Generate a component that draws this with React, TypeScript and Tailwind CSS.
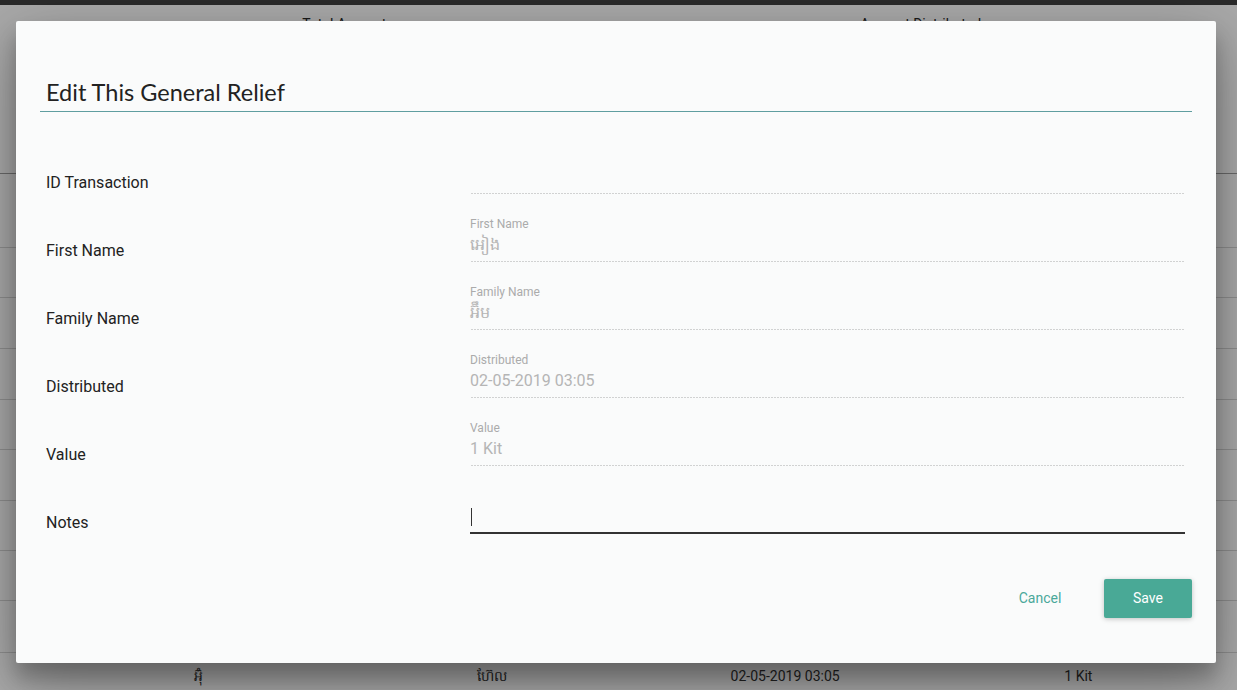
const rows = [
  { h: 'h-[50px]', a: 'សុខ', b: 'ចាន់', c: '02-05-2019 03:05', d: '1 Kit' },
  { h: 'h-[51px]', a: 'វណ្ណា', b: 'សៅ', c: '02-05-2019 03:05', d: '1 Kit' },
  { h: 'h-[51px]', a: 'អៀង', b: 'អ៊ឹម', c: '02-05-2019 03:05', d: '1 Kit' },
  { h: 'h-[50px]', a: 'ស្រី', b: 'គង់', c: '02-05-2019 03:05', d: '1 Kit' },
  { h: 'h-[51px]', a: 'ធី', b: 'ម៉ៅ', c: '02-05-2019 03:05', d: '1 Kit' },
  { h: 'h-[50px]', a: 'ណារី', b: 'ឈឿន', c: '02-05-2019 03:05', d: '1 Kit' },
  { h: 'h-[50px]', a: 'ពៅ', b: 'ខៀវ', c: '02-05-2019 03:05', d: '1 Kit' },
  { h: 'h-[52px]', a: 'រ៉ា', b: 'ទូច', c: '02-05-2019 03:05', d: '1 Kit' },
  { h: 'h-[48px]', a: 'អ៊ុំ', b: 'ហ៊ែល', c: '02-05-2019 03:05', d: '1 Kit' },
];

const fields = [
  { label: 'ID Transaction', floating: '', value: '' },
  { label: 'First Name', floating: 'First Name', value: 'អៀង' },
  { label: 'Family Name', floating: 'Family Name', value: 'អ៊ឹម' },
  { label: 'Distributed', floating: 'Distributed', value: '02-05-2019 03:05' },
  { label: 'Value', floating: 'Value', value: '1 Kit' },
];

function DisabledField({ floating, value }: { floating: string; value: string }) {
  return (
    <div className="flex flex-1 flex-col bg-[linear-gradient(to_right,#a8a8a8_1px,transparent_1px)] bg-[length:3px_1px] bg-bottom bg-repeat-x pt-[24px]">
      {floating && (
        <>
          <span className="text-[12px] leading-[12px] text-[#ababab]">{floating}</span>
          <span className="mt-[6px] text-[16px] leading-[18px] text-[#b5b5b5]">{value}</span>
        </>
      )}
    </div>
  );
}

export default function App() {
  return (
    <div className="relative h-[690px] w-full overflow-hidden bg-white font-[Roboto,sans-serif]">
      {/* page behind the dialog */}
      <div className="h-[5px] bg-[#414141]" />
      <div className="box-border grid h-[169px] grid-cols-2 border-b border-[#a0a0a0] pr-[28px] pl-[56px] pt-[9px] text-[14px] text-[#282828]">
        <div className="text-center">Total Amount</div>
        <div className="text-center">Amount Distributed</div>
      </div>
      <div className="box-border h-[74px] border-b border-[#d6d6d6]" />
      {rows.map((r, i) => (
        <div
          key={i}
          className={`box-border grid grid-cols-4 items-center border-b border-[#d6d6d6] pr-[12px] pl-[52px] text-[14px] text-[#333] ${r.h}`}
        >
          <div className="text-center">{r.a}</div>
          <div className="text-center">{r.b}</div>
          <div className="text-center">{r.c}</div>
          <div className="text-center">{r.d}</div>
        </div>
      ))}

      {/* overlay */}
      <div className="absolute inset-0 bg-black/[0.34]" />

      {/* dialog */}
      <div className="absolute top-[21px] left-[16px] flex h-[642px] w-[1200px] flex-col rounded-[2px] bg-[#fafbfb] px-[24px] pt-[55px] shadow-[0_19px_60px_rgba(0,0,0,0.3),0_15px_20px_rgba(0,0,0,0.22)]">
        <h3 className="border-b border-[#5f9ea0] pb-[3px] pl-[6px] font-[Lato,sans-serif] text-[23.5px] leading-[32px] font-normal text-[#222]">
          Edit This General Relief
        </h3>

        <div className="mt-[14px] flex flex-col">
          {fields.map((f) => (
            <div key={f.label} className="flex h-[68px] pr-[8px] pl-[6px]">
              <div className="mb-[2px] w-[424px] self-end text-[16px] leading-[19px] text-[#222]">
                {f.label}
              </div>
              <DisabledField floating={f.floating} value={f.value} />
            </div>
          ))}
          <div className="flex h-[68px] pr-[7px] pl-[6px]">
            <div className="mb-[2px] w-[424px] self-end text-[16px] leading-[19px] text-[#222]">
              Notes
            </div>
            <div className="flex flex-1 flex-col justify-end border-b-2 border-[#333]">
              <div className="mb-[6px] ml-[1px] h-[18px] w-px bg-[#333]" />
            </div>
          </div>
        </div>

        <div className="mt-[45px] flex justify-end gap-[20px]">
          <button className="h-[39px] w-[88px] rounded-[2px] text-[14px] text-[#4aa89a]">
            Cancel
          </button>
          <button className="h-[39px] w-[88px] rounded-[2px] bg-[#49a996] text-[14px] text-white shadow-[0_1px_6px_rgba(0,0,0,0.12),0_1px_4px_rgba(0,0,0,0.12)]">
            Save
          </button>
        </div>
      </div>
    </div>
  );
}
